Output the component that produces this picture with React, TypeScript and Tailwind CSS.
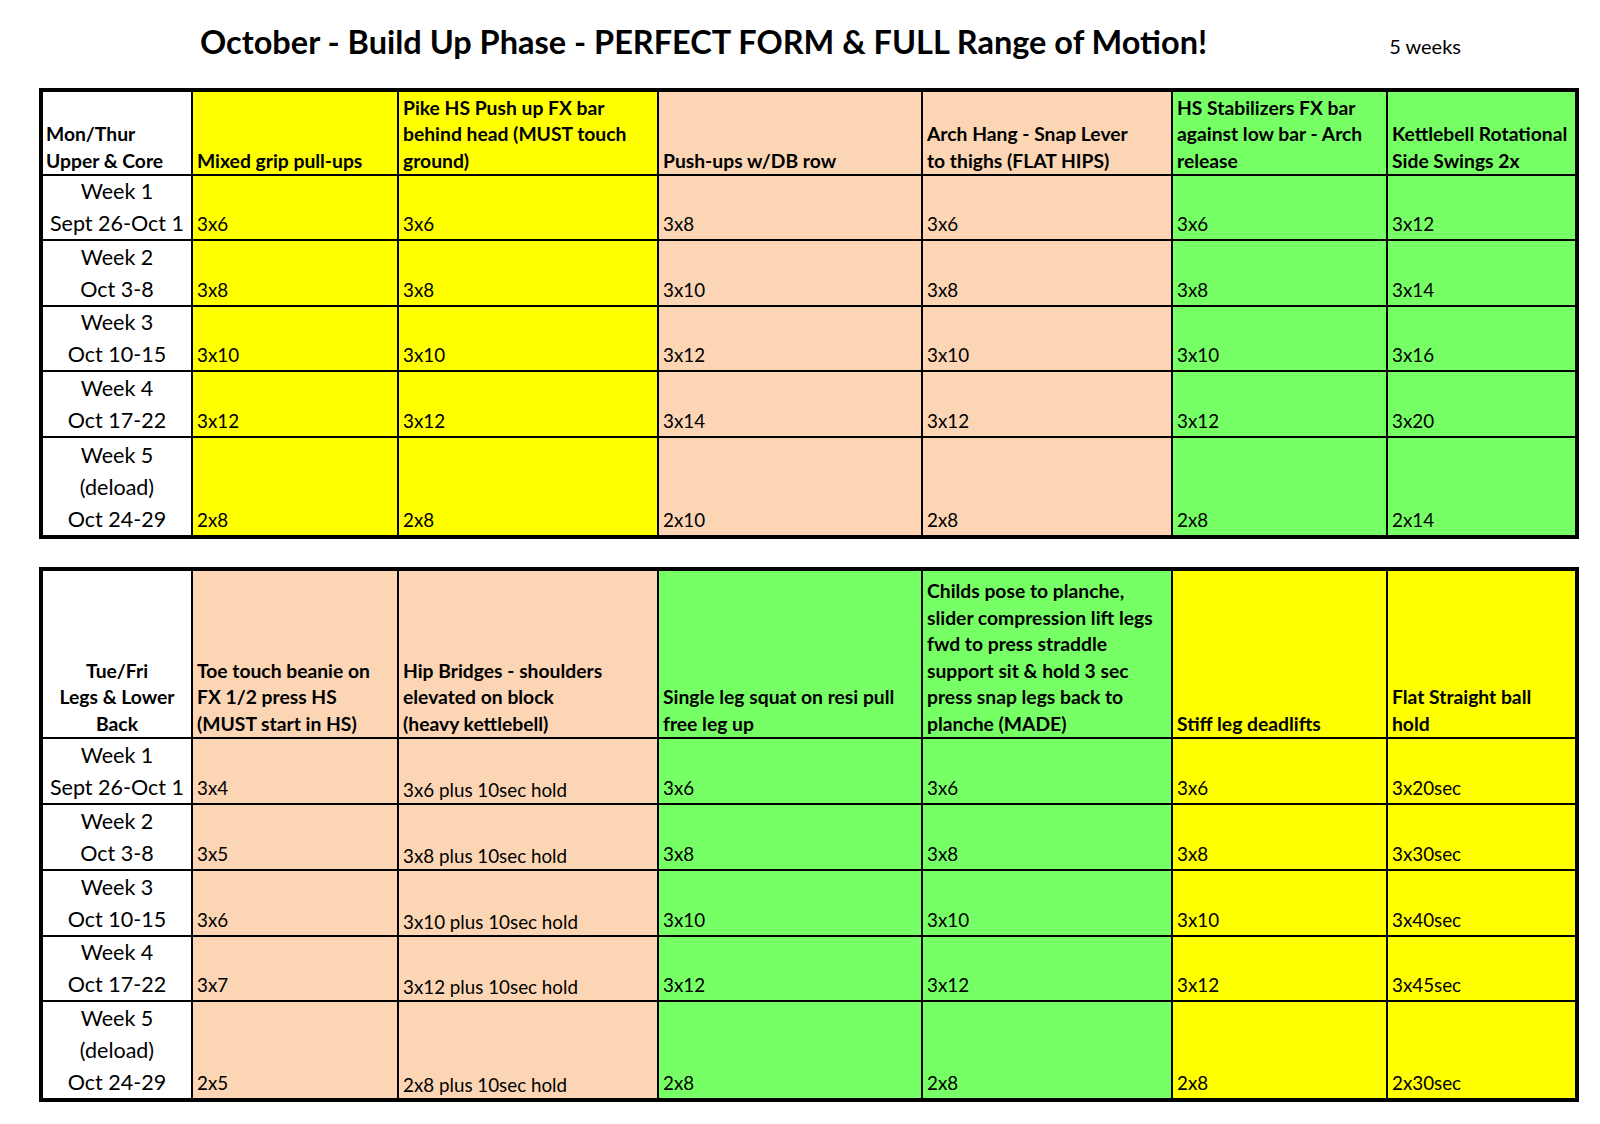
const YELLOW = 'bg-[#ffff00]'
const PEACH = 'bg-[#fcd5b4]'
const GREEN = 'bg-[#77ff66]'

type Block = {
  label: string[]
  labelCenter: boolean
  headers: string[][]
  colors: string[]
  rows: string[][]
  headerH: string
}

const weeks = [
  ['Week 1', 'Sept 26-Oct 1'],
  ['Week 2', 'Oct 3-8'],
  ['Week 3', 'Oct 10-15'],
  ['Week 4', 'Oct 17-22'],
  ['Week 5', '(deload)', 'Oct 24-29'],
]

const upper: Block = {
  label: ['Mon/Thur', 'Upper & Core'],
  labelCenter: false,
  headerH: 'h-[82px]',
  headers: [
    ['Mixed grip pull-ups'],
    ['Pike HS Push up FX bar', 'behind head (MUST touch', 'ground)'],
    ['Push-ups w/DB row'],
    ['Arch Hang - Snap Lever', 'to thighs (FLAT HIPS)'],
    ['HS Stabilizers FX bar', 'against low bar - Arch', 'release'],
    ['Kettlebell Rotational', 'Side Swings 2x'],
  ],
  colors: [YELLOW, YELLOW, PEACH, PEACH, GREEN, GREEN],
  rows: [
    ['3x6', '3x6', '3x8', '3x6', '3x6', '3x12'],
    ['3x8', '3x8', '3x10', '3x8', '3x8', '3x14'],
    ['3x10', '3x10', '3x12', '3x10', '3x10', '3x16'],
    ['3x12', '3x12', '3x14', '3x12', '3x12', '3x20'],
    ['2x8', '2x8', '2x10', '2x8', '2x8', '2x14'],
  ],
}

const lower: Block = {
  label: ['Tue/Fri', 'Legs & Lower', 'Back'],
  labelCenter: true,
  headerH: 'h-[166px]',
  headers: [
    ['Toe touch beanie on', 'FX 1/2 press HS', '(MUST start in HS)'],
    ['Hip Bridges - shoulders', 'elevated on block', '(heavy kettlebell)'],
    ['Single leg squat on resi pull', 'free leg up'],
    [
      'Childs pose to planche,',
      'slider compression lift legs',
      'fwd to press straddle',
      'support sit & hold 3 sec',
      'press snap legs back to',
      'planche (MADE)',
    ],
    ['Stiff leg deadlifts'],
    ['Flat Straight ball', 'hold'],
  ],
  colors: [PEACH, PEACH, GREEN, GREEN, YELLOW, YELLOW],
  rows: [
    ['3x4', '3x6 plus 10sec hold', '3x6', '3x6', '3x6', '3x20sec'],
    ['3x5', '3x8 plus 10sec hold', '3x8', '3x8', '3x8', '3x30sec'],
    ['3x6', '3x10 plus 10sec hold', '3x10', '3x10', '3x10', '3x40sec'],
    ['3x7', '3x12 plus 10sec hold', '3x12', '3x12', '3x12', '3x45sec'],
    ['2x5', '2x8 plus 10sec hold', '2x8', '2x8', '2x8', '2x30sec'],
  ],
}

const rowH = ['h-[63px]', 'h-[64px]', 'h-[63px]', 'h-[64px]', 'h-[97px]']
const rowH2 = ['h-[64px]', 'h-[64px]', 'h-[64px]', 'h-[63px]', 'h-[96px]']

function Sheet({ b, heights }: { b: Block; heights: string[] }) {
  return (
    <div className="grid w-[1540px] grid-cols-[148px_204px_258px_262px_248px_213px_187px] gap-[2px] border-4 border-black bg-black">
      <div
        className={`flex ${b.headerH} flex-col justify-end bg-white px-[3px] text-[19.3px] font-bold leading-[26.5px] ${
          b.labelCenter ? 'items-center' : 'items-start'
        }`}
      >
        {b.label.map((l) => (
          <div key={l} className="whitespace-nowrap">{l}</div>
        ))}
      </div>
      {b.headers.map((h, i) => (
        <div key={i} className={`flex flex-col justify-end ${b.colors[i]} px-[4px] text-[19.3px] font-bold leading-[26.5px]`}>
          {h.map((l) => (
            <div key={l} className="whitespace-nowrap">{l}</div>
          ))}
        </div>
      ))}
      {b.rows.map((r, ri) => (
        <div key={ri} className="contents">
          <div className={`flex ${heights[ri]} flex-col items-center justify-end bg-white text-[21.5px] leading-[32px]`}>
            {weeks[ri].map((w) => (
              <div key={w} className="whitespace-nowrap">{w}</div>
            ))}
          </div>
          {r.map((v, ci) => (
            <div
              key={ci}
              className={`flex flex-col justify-end ${b.colors[ci]} px-[4px] text-[18.8px] ${
                v.includes('plus') ? 'leading-[26px]' : 'leading-[30px]'
              }`}
            >
              <div className="whitespace-nowrap">{v}</div>
            </div>
          ))}
        </div>
      ))}
    </div>
  )
}

export default function App() {
  return (
    <div className="min-h-[1124px] w-[1600px] bg-white pl-[39px] text-black" style={{ fontFamily: 'Lato, "Liberation Sans", sans-serif' }}>
      <div className="flex h-[88px] items-center pb-[4px]">
        <div className="ml-[161px] whitespace-nowrap text-[32.5px] font-bold">
          October - Build Up Phase - PERFECT FORM &amp; FULL Range of Motion!
        </div>
        <div className="ml-auto mr-[139px] mt-[8px] whitespace-nowrap text-[20px]">5 weeks</div>
      </div>
      <Sheet b={upper} heights={rowH} />
      <div className="h-[28px]" />
      <Sheet b={lower} heights={rowH2} />
    </div>
  )
}
